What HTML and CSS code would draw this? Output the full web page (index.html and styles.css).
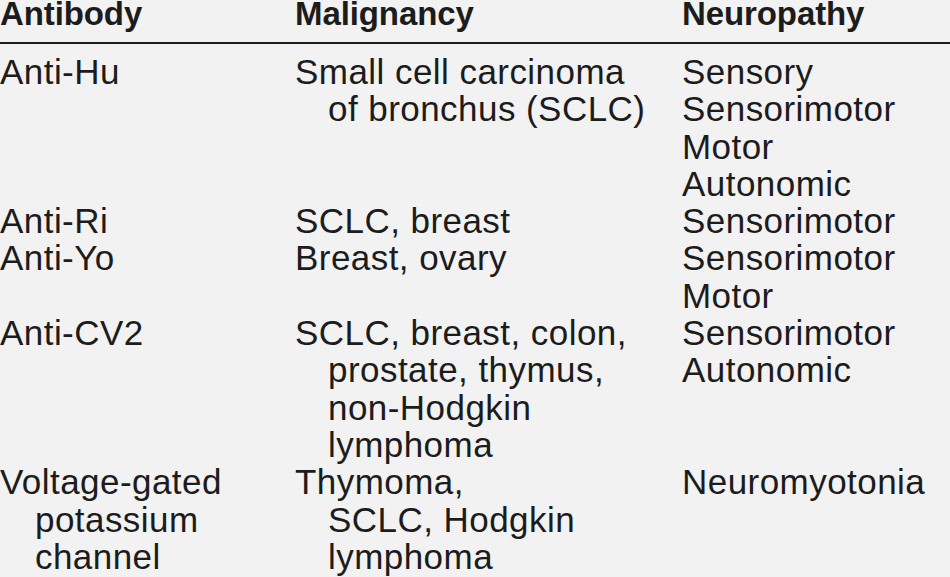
FILE: index.html
```html
<!DOCTYPE html>
<html>
<head>
<meta charset="utf-8">
<link rel="stylesheet" href="styles.css">
</head>
<body>
<div class="table">
  <div class="row head">
    <div class="cell">Antibody</div>
    <div class="cell">Malignancy</div>
    <div class="cell">Neuropathy</div>
  </div>
  <div class="tbody">
    <div class="row">
      <div class="cell hang">Anti-Hu</div>
      <div class="cell hang">Small cell carcinoma<br>of bronchus (SCLC)</div>
      <div class="cell">Sensory<br>Sensorimotor<br>Motor<br>Autonomic</div>
    </div>
    <div class="row">
      <div class="cell hang">Anti-Ri</div>
      <div class="cell hang">SCLC, breast</div>
      <div class="cell">Sensorimotor</div>
    </div>
    <div class="row">
      <div class="cell hang">Anti-Yo</div>
      <div class="cell hang">Breast, ovary</div>
      <div class="cell">Sensorimotor<br>Motor</div>
    </div>
    <div class="row">
      <div class="cell hang">Anti-CV2</div>
      <div class="cell hang">SCLC, breast, colon,<br>prostate, thymus,<br>non-Hodgkin<br>lymphoma</div>
      <div class="cell">Sensorimotor<br>Autonomic</div>
    </div>
    <div class="row">
      <div class="cell hang">Voltage-gated<br>potassium<br>channel</div>
      <div class="cell hang">Thymoma,<br>SCLC, Hodgkin<br>lymphoma</div>
      <div class="cell">Neuromyotonia</div>
    </div>
  </div>
</div>
</body>
</html>
```
FILE: styles.css
```css
html, body {
  margin: 0;
  padding: 0;
  background: #f2f2f2;
}
body {
  width: 950px;
  height: 577px;
  overflow: hidden;
  font-family: "Liberation Sans", Arial, sans-serif;
  color: #1c1c1c;
}
.row {
  display: grid;
  grid-template-columns: 295px 387px 1fr;
}
.head {
  font-weight: bold;
  font-size: 33px;
  line-height: 27px;
  letter-spacing: -0.1px;
  padding-bottom: 15px;
  border-bottom: 2px solid #1c1c1c;
}
.tbody {
  padding-top: 9px;
  font-size: 35px;
  line-height: 37.3px;
  letter-spacing: 0.45px;
}
.cell {
  white-space: nowrap;
}
.hang {
  padding-left: 33px;
  text-indent: -33px;
}
.tbody .row .cell:first-child {
  padding-left: 35px;
  text-indent: -35px;
}
```
